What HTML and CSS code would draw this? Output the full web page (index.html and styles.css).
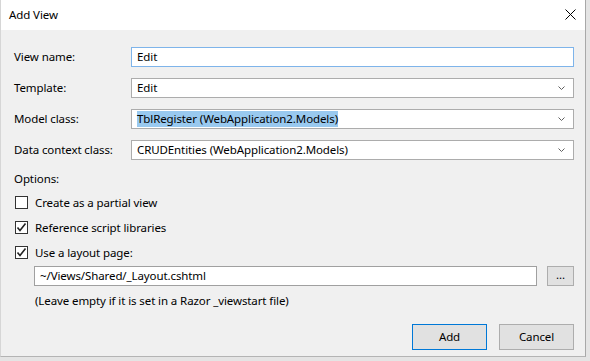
FILE: index.html
```html
<!DOCTYPE html>
<html>
<head>
<meta charset="utf-8">
<link rel="stylesheet" href="styles.css">
</head>
<body>
<div class="window">
  <div class="titlebar">
    <span class="title">Add View</span>
    <svg class="close" width="11" height="11" viewBox="0 0 11 11"><path d="M0.5 0.5 L10.5 10.5 M10.5 0.5 L0.5 10.5" stroke="#000" stroke-width="1" fill="none"/></svg>
  </div>
  <div class="content">
    <div class="row">
      <span class="label">View name:</span>
      <div class="field focused"><span>Edit</span></div>
    </div>
    <div class="row">
      <span class="label">Template:</span>
      <div class="field combo"><span>Edit</span><svg class="chev" width="7" height="4" viewBox="0 0 7 4"><path d="M0.5 0.5 L3.5 3.5 L6.5 0.5" stroke="#606060" fill="none"/></svg></div>
    </div>
    <div class="row">
      <span class="label">Model class:</span>
      <div class="field combo"><span class="sel">TblRegister (WebApplication2.Models)</span><svg class="chev" width="7" height="4" viewBox="0 0 7 4"><path d="M0.5 0.5 L3.5 3.5 L6.5 0.5" stroke="#606060" fill="none"/></svg></div>
    </div>
    <div class="row">
      <span class="label">Data context class:</span>
      <div class="field combo"><span>CRUDEntities (WebApplication2.Models)</span><svg class="chev" width="7" height="4" viewBox="0 0 7 4"><path d="M0.5 0.5 L3.5 3.5 L6.5 0.5" stroke="#606060" fill="none"/></svg></div>
    </div>
    <div class="options">Options:</div>
    <div class="check-row"><span class="box"></span><span>Create as a partial view</span></div>
    <div class="check-row"><span class="box"><svg width="11" height="11" viewBox="0 0 11 11"><path d="M1.5 5.5 L4 8.5 L9.5 1.5" stroke="#222" stroke-width="1.6" fill="none"/></svg></span><span>Reference script libraries</span></div>
    <div class="check-row"><span class="box"><svg width="11" height="11" viewBox="0 0 11 11"><path d="M1.5 5.5 L4 8.5 L9.5 1.5" stroke="#222" stroke-width="1.6" fill="none"/></svg></span><span>Use a layout page:</span></div>
    <div class="layout-row">
      <div class="field layout"><span>~/Views/Shared/_Layout.cshtml</span></div>
      <div class="btn small">...</div>
    </div>
    <div class="hint">(Leave empty if it is set in a Razor _viewstart file)</div>
    <div class="buttons">
      <div class="btn default">Add</div>
      <div class="btn">Cancel</div>
    </div>
  </div>
</div>
</body>
</html>
```

FILE: styles.css
```css
html, body {
  margin: 0;
  padding: 0;
}
body {
  width: 590px;
  height: 361px;
  background: #e4e4e4;
  font-family: "Noto Sans", "Open Sans", sans-serif;
  font-size: 11.5px;
  letter-spacing: -0.1px;
  color: #000;
  overflow: hidden;
}
.window {
  width: 586px;
  height: 357px;
  box-sizing: border-box;
  border-left: 1px solid #d6d6d6;
  border-right: 1px solid #a8a8a8;
  border-bottom: 1px solid #b4b4b4;
  background: #f0f0f0;
  display: flex;
  flex-direction: column;
}
.titlebar {
  height: 30px;
  flex: none;
  background: #fff;
  display: flex;
  align-items: center;
  justify-content: space-between;
  padding: 0 9px 0 8px;
}
.title {
  line-height: 16px;
}
.close {
  display: block;
  margin-top: -2px;
}
.content {
  padding: 17px 11px 0 13px;
  display: flex;
  flex-direction: column;
}
.row {
  display: grid;
  grid-template-columns: 117px 1fr;
  align-items: center;
  height: 20px;
  margin-bottom: 11px;
}
.label {
  line-height: 16px;
}
.field {
  height: 20px;
  box-sizing: border-box;
  border: 1px solid #acacac;
  background: #fff;
  display: flex;
  align-items: center;
  padding-left: 5px;
  padding-right: 8px;
  line-height: 16px;
}
.field.focused {
  border-color: #7eb4ea;
}
.combo {
  justify-content: space-between;
}
.chev {
  display: block;
}
.sel {
  background: #99c9ef;
}
.options {
  line-height: 16px;
  margin-bottom: 3px;
}
.check-row {
  display: flex;
  align-items: center;
  height: 25px;
  padding-left: 1px;
}
.box {
  width: 13px;
  height: 13px;
  box-sizing: border-box;
  border: 1px solid #333;
  background: #fff;
  margin-right: 7px;
  display: flex;
  align-items: center;
  justify-content: center;
}
.box svg {
  display: block;
}
.layout-row {
  display: flex;
  margin-top: 1px;
  padding-left: 20px;
  gap: 10px;
}
.field.layout {
  flex: 1;
  border-color: #a0a0a0;
}
.btn {
  height: 26px;
  width: 75px;
  box-sizing: border-box;
  border: 1px solid #adadad;
  background: #e1e1e1;
  display: flex;
  align-items: center;
  justify-content: center;
  line-height: 16px;
}
.btn.small {
  width: 27px;
  height: 20px;
  padding-bottom: 3px;
}
.btn.default {
  border-color: #0078d7;
}
.hint {
  padding-left: 21px;
  margin-top: 7px;
  line-height: 16px;
}
.buttons {
  display: flex;
  justify-content: flex-end;
  gap: 12px;
  margin-top: 15px;
}
```
